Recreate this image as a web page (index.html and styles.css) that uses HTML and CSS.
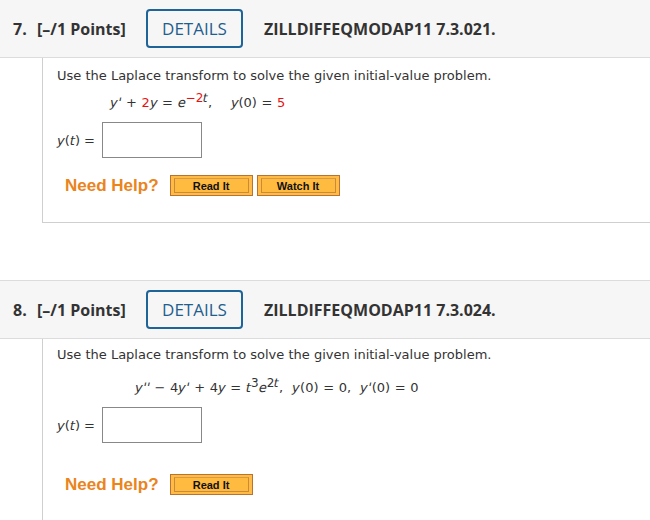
FILE: index.html
```html
<!DOCTYPE html>
<html>
<head>
<meta charset="utf-8">
<link rel="stylesheet" href="styles.css">
</head>
<body>
<div class="question q1">
  <div class="qhead">
    <span class="qnum">7.</span>
    <span class="qpts">[–/1 Points]</span>
    <span class="details">DETAILS</span>
    <span class="qid">ZILLDIFFEQMODAP11 7.3.021.</span>
  </div>
  <div class="qbody">
    <p class="prompt">Use the Laplace transform to solve the given initial-value problem.</p>
    <p class="eq eq1"><i>y'</i> + <span class="red">2</span><i>y</i> = <i>e</i><sup><span class="red">−2</span><i>t</i></sup>,&nbsp;&nbsp;&nbsp; <i>y</i>(0) = <span class="red">5</span></p>
    <div class="answer">
      <span class="lbl"><i>y</i>(<i>t</i>) =</span>
      <span class="box"></span>
    </div>
    <div class="help">
      <span class="need">Need Help?</span>
      <span class="btn"><span>Read It</span></span>
      <span class="btn"><span>Watch It</span></span>
    </div>
  </div>
</div>
<div class="question q2">
  <div class="qhead">
    <span class="qnum">8.</span>
    <span class="qpts">[–/1 Points]</span>
    <span class="details">DETAILS</span>
    <span class="qid">ZILLDIFFEQMODAP11 7.3.024.</span>
  </div>
  <div class="qbody">
    <p class="prompt">Use the Laplace transform to solve the given initial-value problem.</p>
    <p class="eq eq2"><i>y''</i> − 4<i>y'</i> + 4<i>y</i> = <i>t</i><sup>3</sup><i>e</i><sup>2<i>t</i></sup>,&nbsp; <i>y</i>(0) = 0,&nbsp; <i>y'</i>(0) = 0</p>
    <div class="answer">
      <span class="lbl"><i>y</i>(<i>t</i>) =</span>
      <span class="box"></span>
    </div>
    <div class="help">
      <span class="need">Need Help?</span>
      <span class="btn"><span>Read It</span></span>
    </div>
  </div>
</div>
</body>
</html>
```
FILE: styles.css
```css
html, body {
  margin: 0;
  padding: 0;
  background: #fff;
  width: 650px;
  overflow: hidden;
}
body {
  font-family: "DejaVu Sans", Verdana, sans-serif;
  color: #333;
}
.qhead {
  background: #f6f6f6;
  height: 57px;
  border-bottom: 1px solid #dcdcdc;
  display: flex;
  align-items: center;
  padding-left: 13px;
  font-family: "Open Sans", sans-serif;
  font-weight: bold;
  font-size: 16px;
  color: #333;
}
.q2 .qhead {
  border-top: 1px solid #dcdcdc;
}
.qnum { width: 24px; }
.qpts { width: 109px; }
.details {
  box-sizing: border-box;
  width: 97px;
  height: 39px;
  border: 2px solid #1f6496;
  border-radius: 4px;
  color: #1f5e8e;
  font-weight: normal;
  font-size: 17px;
  display: flex;
  align-items: center;
  justify-content: center;
  margin-right: 21px;
}
.qbody {
  margin-left: 42px;
  border-left: 1px solid #cfcfcf;
  border-bottom: 1px solid #cfcfcf;
  padding-left: 14px;
}
.q1 .qbody { height: 164px; }
.q2 .qbody { height: 200px; border-bottom: none; }
.q1 { margin-bottom: 57px; }
.prompt {
  margin: 0;
  font-size: 13px;
  line-height: 16px;
  padding-top: 10px;
}
.q2 .prompt { padding-top: 8px; }
.eq {
  margin: 0;
  font-size: 13px;
  line-height: 16px;
  word-spacing: 0.5px;
}
i {
  font-style: normal;
  display: inline-block;
  transform: skewX(-13deg);
}
.eq sup {
  font-size: 12px;
  line-height: 0;
  vertical-align: 5px;
}
.eq1 { padding-left: 53px; margin-top: 11px; }
.eq2 { padding-left: 78px; margin-top: 17px; }
.red { color: #e8110f; }
.answer {
  display: flex;
  align-items: center;
  font-size: 13px;
}
.q1 .answer { margin-top: 11px; }
.q2 .answer { margin-top: 11px; }
.lbl { width: 45px; }
.box {
  box-sizing: border-box;
  width: 100px;
  height: 36px;
  border: 1px solid #888;
  background: #fff;
}
.help {
  display: flex;
  align-items: center;
  padding-left: 8px;
}
.q1 .help { margin-top: 17px; }
.q2 .help { margin-top: 31px; }
.need {
  font-family: "Liberation Sans", Arial, sans-serif;
  font-weight: bold;
  font-size: 17px;
  color: #ea841b;
  margin-right: 11px;
}
.btn {
  box-sizing: border-box;
  width: 83px;
  height: 21px;
  border: 1px solid #b9732f;
  background: #ffbb44;
  padding: 2px 3px;
  margin-right: 4px;
  display: flex;
}
.btn span {
  flex: 1;
  border: 1px solid #c98b3a;
  border-top-color: #d99a44;
  background: #ffbb40;
  font-family: "Liberation Sans", Arial, sans-serif;
  font-weight: bold;
  font-size: 11px;
  color: #111;
  display: flex;
  align-items: center;
  justify-content: center;
}
```
